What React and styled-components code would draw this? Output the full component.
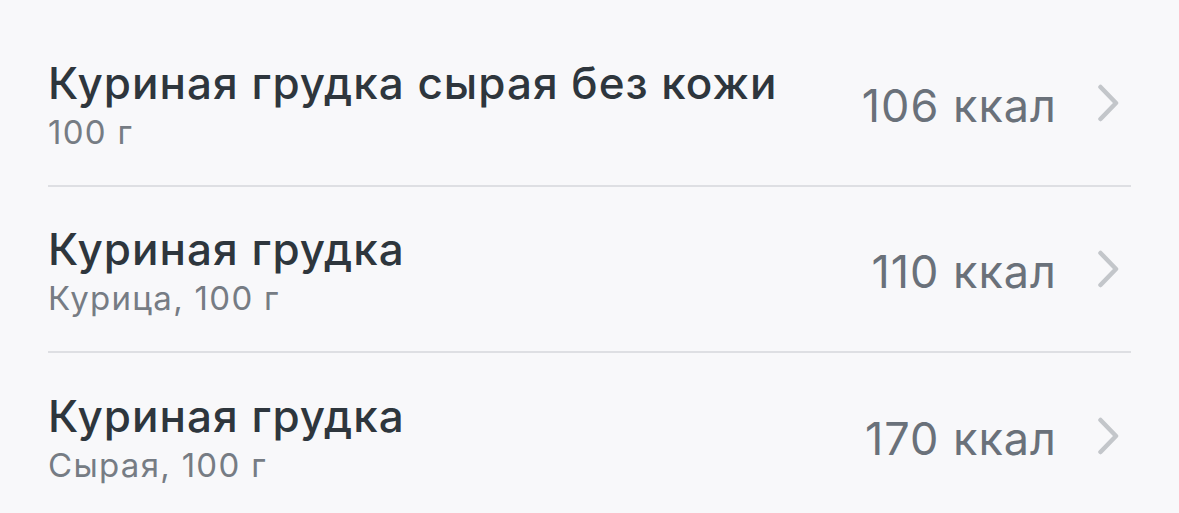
import React from "react";
import styled, { createGlobalStyle } from "styled-components";

const Global = createGlobalStyle`
  html, body { margin: 0; padding: 0; background: #f8f8fa; }
  body { font-family: Inter, "Noto Sans", sans-serif; -webkit-font-smoothing: antialiased; }
`;

const List = styled.div`
  padding: 21px 48px 0 48px;
  background: #f8f8fa;
  height: 513px;
  box-sizing: border-box;
  overflow: hidden;
`;

const Row = styled.div`
  display: flex;
  align-items: center;
  height: 166px;
  box-sizing: border-box;
  border-bottom: ${(p) => (p.$last ? "none" : "2px solid #dedfe3")};
`;

const TextBlock = styled.div`
  flex: 1;
  display: flex;
  flex-direction: column;
  min-width: 0;
  padding-top: 5px;
`;

const Title = styled.div`
  font-size: 44px;
  line-height: 52px;
  letter-spacing: 1px;
  color: #2e363d;
  font-weight: 500;
  white-space: nowrap;
`;

const Subtitle = styled.div`
  font-size: 33px;
  line-height: 46px;
  letter-spacing: 1.3px;
  color: #767c84;
  white-space: nowrap;
`;

const Value = styled.div`
  font-size: 45px;
  letter-spacing: 1px;
  color: #6a717a;
  white-space: nowrap;
  margin-right: 41px;
  padding-top: 4px;
`;

const Chevron = styled.svg`
  width: 33px;
  height: 38px;
  flex: none;
`;

const items = [
  { title: "Куриная грудка сырая без кожи", sub: "100 г", kcal: "106 ккал" },
  { title: "Куриная грудка", sub: "Курица, 100 г", kcal: "110 ккал" },
  { title: "Куриная грудка", sub: "Сырая, 100 г", kcal: "170 ккал" },
];

export default function App() {
  return (
    <>
      <Global />
      <List>
        {items.map((it, i) => (
          <Row key={i} $last={i === items.length - 1}>
            <TextBlock>
              <Title>{it.title}</Title>
              <Subtitle>{it.sub}</Subtitle>
            </TextBlock>
            <Value>{it.kcal}</Value>
            <Chevron viewBox="0 0 33 38">
              <path d="M2.5 3 L18 19 L2.5 35" fill="none" stroke="#c3c6ca" strokeWidth="4.5" strokeLinecap="round" strokeLinejoin="round" />
            </Chevron>
          </Row>
        ))}
      </List>
    </>
  );
}
